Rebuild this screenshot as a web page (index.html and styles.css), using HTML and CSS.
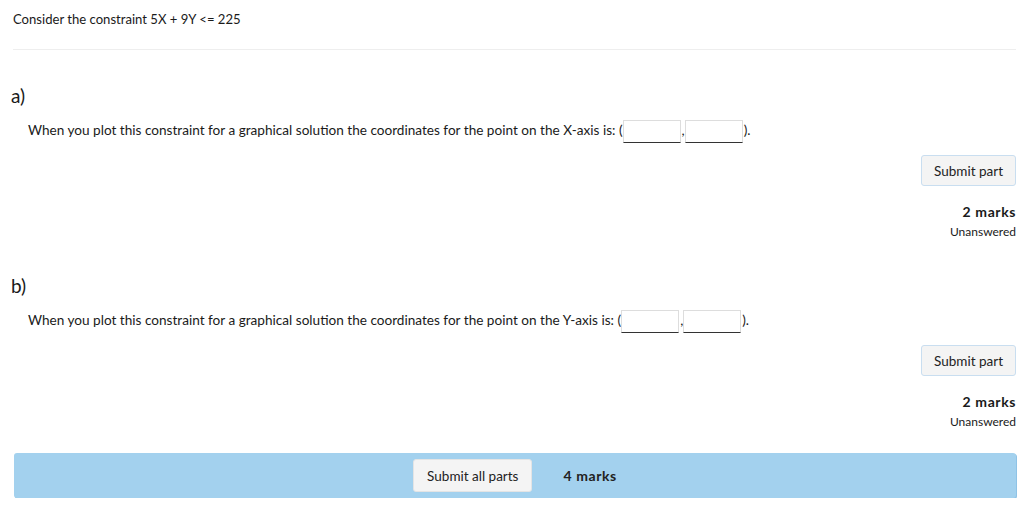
FILE: index.html
```html
<!DOCTYPE html>
<html>
<head>
<meta charset="utf-8">
<link rel="stylesheet" href="styles.css">
</head>
<body>
<div class="page">
  <div class="statement">Consider the constraint 5X + 9Y &lt;= 225</div>
  <hr class="rule">

  <section class="part">
    <h3 class="part-label">a)</h3>
    <p class="prompt">When you plot this constraint for a graphical solution the coordinates for the point on the X-axis is: (<input class="gap" type="text">,<input class="gap" type="text">).</p>
    <div class="part-footer">
      <button class="btn">Submit part</button>
      <div class="marks">2 marks</div>
      <div class="status">Unanswered</div>
    </div>
  </section>

  <section class="part">
    <h3 class="part-label">b)</h3>
    <p class="prompt">When you plot this constraint for a graphical solution the coordinates for the point on the Y-axis is: (<input class="gap" type="text">,<input class="gap" type="text">).</p>
    <div class="part-footer">
      <button class="btn">Submit part</button>
      <div class="marks">2 marks</div>
      <div class="status">Unanswered</div>
    </div>
  </section>

  <div class="submit-bar">
    <button class="btn btn-all">Submit all parts</button>
    <span class="total">4 marks</span>
  </div>
</div>
</body>
</html>
```
FILE: styles.css
```css
html, body {
  margin: 0;
  padding: 0;
  background: #ffffff;
}
body {
  font-family: "Source Sans Pro", Lato, "Liberation Sans", sans-serif;
  color: #1a1a1a;
  font-size: 13.5px;
}
.page {
  padding: 10px 8px 0 13px;
}
.statement {
  line-height: 18px;
  font-size: 13.1px;
}
.rule {
  border: 0;
  border-top: 1px solid #eeeeee;
  margin: 21px 0 0 0;
  height: 0;
}
.part-label {
  font-weight: normal;
  font-size: 19px;
  line-height: 24px;
  margin: 34px 0 0 -2px;
}
.prompt {
  margin: 10px 0 0 15px;
  line-height: 24px;
  font-size: 13.6px;
}
.gap {
  width: 58px;
  height: 23px;
  box-sizing: border-box;
  border: 1px solid #dddddd;
  border-bottom: 1px solid #333333;
  vertical-align: middle;
  margin: 0 1px 0 0;
  padding: 0 3px;
  font: inherit;
  background: #fff;
}
.part-footer {
  display: flex;
  flex-direction: column;
  align-items: flex-end;
  margin-top: 12px;
}
.btn {
  font-family: inherit;
  font-size: 13.5px;
  color: #222;
  background: #f4f4f4;
  border: 1px solid #c9def0;
  border-radius: 3px;
  height: 31px;
  padding: 0 12px;
  cursor: pointer;
}
.marks {
  font-weight: bold;
  font-size: 14px;
  letter-spacing: 0.6px;
  margin-top: 17px;
  line-height: 18px;
}
.status {
  font-size: 12px;
  margin-top: 3px;
  line-height: 16px;
}
.submit-bar {
  margin: 23px 0 0 1px;
  height: 45px;
  background: #a3d1ee;
  border-radius: 3px;
  box-shadow: 1px 1px 0 #8fc3e6;
  display: flex;
  align-items: center;
  justify-content: center;
  gap: 31px;
  box-sizing: border-box;
}
.btn-all {
  height: 33px;
  border: 1px solid #e4e4e4;
  background: #f4f4f4;
  padding: 0 13px;
}
.total {
  font-weight: bold;
  font-size: 14px;
  letter-spacing: 0.6px;
  color: #222;
}
```
